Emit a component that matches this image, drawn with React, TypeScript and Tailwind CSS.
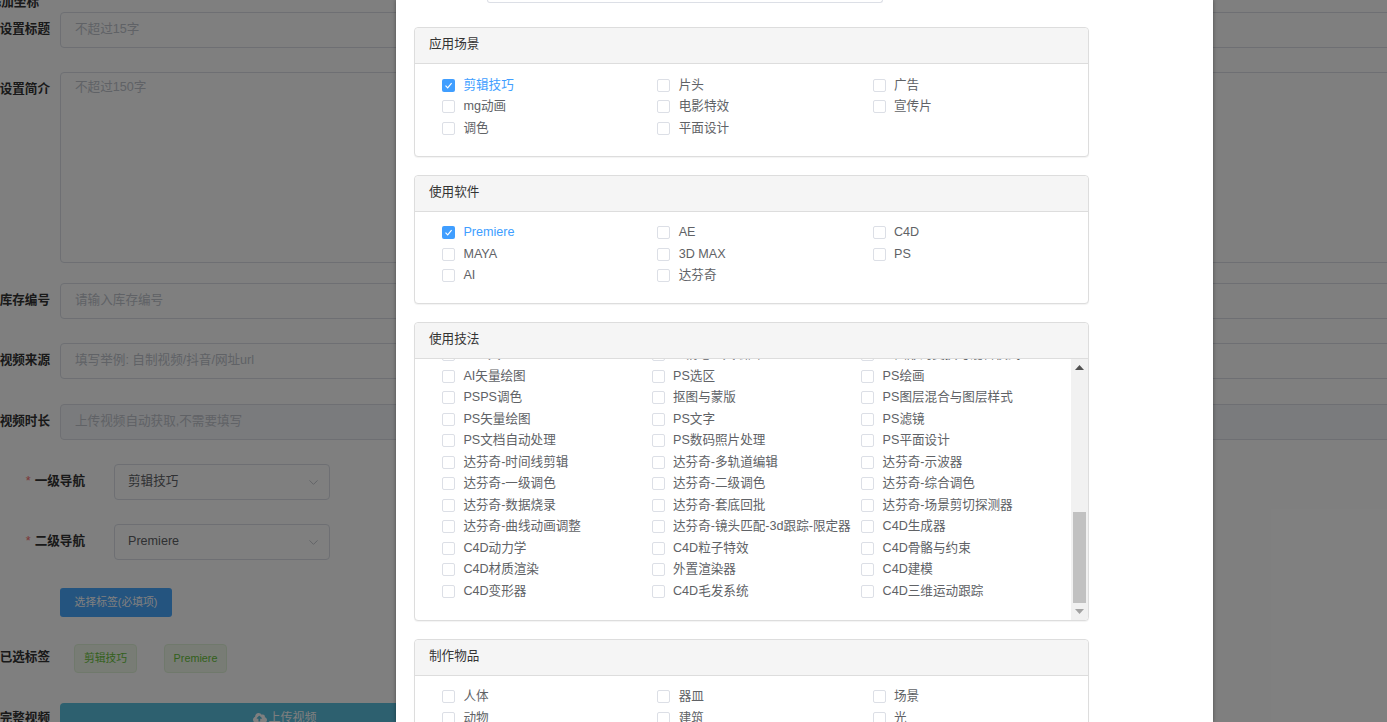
import { ChevronDown } from "lucide-react";
import { FaCloudUploadAlt } from "react-icons/fa";

const scenes = ["剪辑技巧", "片头", "广告", "mg动画", "电影特效", "宣传片", "调色", "平面设计"];
const software = ["Premiere", "AE", "C4D", "MAYA", "3D MAX", "PS", "AI", "达芬奇"];
const skills = [
  "AI工具", "AI钢笔工具绘图", "AI图形的变换与混合模式",
  "AI矢量绘图", "PS选区", "PS绘画",
  "PSPS调色", "抠图与蒙版", "PS图层混合与图层样式",
  "PS矢量绘图", "PS文字", "PS滤镜",
  "PS文档自动处理", "PS数码照片处理", "PS平面设计",
  "达芬奇-时间线剪辑", "达芬奇-多轨道编辑", "达芬奇-示波器",
  "达芬奇-一级调色", "达芬奇-二级调色", "达芬奇-综合调色",
  "达芬奇-数据烧录", "达芬奇-套底回批", "达芬奇-场景剪切探测器",
  "达芬奇-曲线动画调整", "达芬奇-镜头匹配-3d跟踪-限定器", "C4D生成器",
  "C4D动力学", "C4D粒子特效", "C4D骨骼与约束",
  "C4D材质渲染", "外置渲染器", "C4D建模",
  "C4D变形器", "C4D毛发系统", "C4D三维运动跟踪",
];
const objects = ["人体", "器皿", "场景", "动物", "建筑", "光"];

const Check = ({ label, checked }: { label: string; checked?: boolean }) => (
  <div className="flex items-center gap-[8.4px] whitespace-nowrap">
    {checked ? (
      <span className="flex h-[13px] w-[13px] shrink-0 items-center justify-center rounded-[2px] bg-[#409eff]">
        <svg width="9" height="9" viewBox="0 0 9 9" fill="none" stroke="white" strokeWidth="1.2">
          <path d="M1.5 4.6 L3.7 6.8 L7.6 2.2" />
        </svg>
      </span>
    ) : (
      <span className="h-[13px] w-[13px] shrink-0 rounded-[2px] border border-[#dcdfe6] bg-white" />
    )}
    <span className={checked ? "text-[#409eff]" : "text-[#606266]"}>{label}</span>
  </div>
);

const Panel = ({ title, bodyClass, children }: { title: string; bodyClass: string; children: React.ReactNode }) => (
  <div className="mb-[18px] shrink-0 rounded-[4px] border border-[#dddddd] bg-white shadow-[0_1px_1px_rgba(0,0,0,0.05)]">
    <div className="flex h-9 items-center rounded-t-[4px] border-b border-[#dddddd] bg-[#f5f5f5] px-[14px] pb-[2px] text-[12.6px] text-[#333333]">
      {title}
    </div>
    <div className={bodyClass}>{children}</div>
  </div>
);

const Tags = ({ items, checked }: { items: string[]; checked: string }) => (
  <div className="grid grid-cols-[repeat(3,215.3px)] auto-rows-[21.5px] pl-[27px] text-[12.6px]">
    {items.map((t) => (
      <Check key={t} label={t} checked={t === checked} />
    ))}
  </div>
);

const inputCls =
  "h-9 w-full rounded-[4px] border border-[#dcdfe6] bg-white px-[14px] pb-[2px] text-[12.6px] outline-none placeholder:text-[#c0c4cc]";

const Row = ({ label, className, children }: { label: string; className: string; children: React.ReactNode }) => (
  <div className={`flex gap-[10px] ${className}`}>
    <div className="flex h-9 w-[50px] shrink-0 items-center justify-end whitespace-nowrap pb-[2px] text-[12.6px] font-bold text-[#333333]">
      {label}
    </div>
    {children}
  </div>
);

const NavRow = ({ label, value, className }: { label: string; value: string; className: string }) => (
  <div className={`flex items-center gap-[29px] ${className}`}>
    <div className="flex w-[85px] justify-end whitespace-nowrap pb-[2px] text-[12.6px] font-bold text-[#333333]">
      <span className="mr-1 font-normal text-[#f56c6c]">*</span>
      {label}
    </div>
    <div className="flex h-9 w-[216px] items-center justify-between rounded-[4px] border border-[#dcdfe6] bg-white pl-[13px] pr-[8px] text-[12.6px] text-[#606266]">
      <span className="pb-px">{value}</span>
      <ChevronDown size={15} strokeWidth={1.5} className="text-[#c0c4cc]" />
    </div>
  </div>
);

const App = () => {
  return (
    <div className="relative h-[722px] w-[1387px] overflow-hidden bg-white [font-family:'Liberation_Sans','Noto_Sans_CJK_SC',sans-serif]">
      {/* page behind the dialog */}
      <div className="flex w-[1500px] flex-col">
        <div className="flex h-[12px] w-[39px] justify-end whitespace-nowrap text-[12.6px] font-bold leading-[5px] text-[#333333]">
          添加坐标
        </div>
        <Row label="设置标题" className="">
          <input className={inputCls} placeholder="不超过15字" />
        </Row>
        <Row label="设置简介" className="mt-6">
          <textarea className={`${inputCls} !h-[191px] resize-none py-[5px] leading-[18px]`} placeholder="不超过150字" />
        </Row>
        <Row label="库存编号" className="mt-5">
          <input className={inputCls} placeholder="请输入库存编号" />
        </Row>
        <Row label="视频来源" className="mt-6">
          <input className={inputCls} placeholder="填写举例: 自制视频/抖音/网址url" />
        </Row>
        <Row label="视频时长" className="mt-[25px]">
          <input disabled className={`${inputCls} !bg-[#f5f7fa]`} placeholder="上传视频自动获取,不需要填写" />
        </Row>
        <NavRow label="一级导航" value="剪辑技巧" className="mt-6" />
        <NavRow label="二级导航" value="Premiere" className="mt-6" />
        <div className="ml-[60px] mt-7 flex h-[29px] w-[112px] items-center justify-center rounded-[3px] bg-[#48a8ff] text-[10.8px] text-white">
          选择标签(必填项)
        </div>
        <div className="mt-[27px] flex h-[29px] items-center gap-[10px]">
          <div className="flex w-[50px] justify-end whitespace-nowrap pb-[2px] text-[12.6px] font-bold text-[#333333]">已选标签</div>
          <div className="flex gap-[27px] pl-[14px] text-[10.8px] text-[#67c23a]">
            <span className="flex h-[29px] w-[63px] items-center justify-center rounded-[4px] border border-[#e1f3d8] bg-[#f0f9eb]">剪辑技巧</span>
            <span className="flex h-[29px] w-[63px] items-center justify-center rounded-[4px] border border-[#e1f3d8] bg-[#f0f9eb]">Premiere</span>
          </div>
        </div>
        <div className="mt-[30px] flex items-start gap-[10px]">
          <div className="flex h-[30px] w-[50px] items-center justify-end whitespace-nowrap text-[12.6px] font-bold text-[#333333]">完整视频</div>
          <div className="flex h-[30px] w-[450px] items-center justify-center gap-px rounded-[4px] bg-[#5bc0de] text-[12px] text-white">
            <FaCloudUploadAlt size={14} />
            上传视频
          </div>
        </div>
      </div>

      {/* backdrop */}
      <div className="absolute inset-0 bg-black/50" />

      {/* dialog */}
      <div className="absolute bottom-0 left-[396px] top-0 flex w-[817px] flex-col bg-white px-[18px] shadow-[0_0_4px_rgba(0,0,0,0.4)]">
        <div className="ml-[73px] h-[3px] w-[396px] shrink-0 rounded-b-[4px] border border-t-0 border-[#dcdfe6]" />
        <div className="h-6 shrink-0" />
        <div className="w-[675px]">
          <Panel title="应用场景" bodyClass="h-[92px] pt-[10.5px]">
            <Tags items={scenes} checked="剪辑技巧" />
          </Panel>
          <Panel title="使用软件" bodyClass="h-[91px] pt-[10px]">
            <Tags items={software} checked="Premiere" />
          </Panel>
          <Panel title="使用技法" bodyClass="flex h-[261px]">
            <div className="flex-1 overflow-hidden">
              <div className="-mt-[15.25px] grid grid-cols-[repeat(3,209.6px)] auto-rows-[21.5px] pl-[27px] text-[12.6px]">
                {skills.map((t) => (
                  <Check key={t} label={t} />
                ))}
              </div>
            </div>
            <div className="flex w-[17px] shrink-0 flex-col items-center rounded-br-[4px] bg-[#f1f1f1]">
              <div className="flex h-[17px] w-full items-center justify-center">
                <svg width="9" height="5" viewBox="0 0 9 5"><path d="M4.5 0 L9 5 L0 5 Z" fill="#505050" /></svg>
              </div>
              <div className="mt-[136px] h-[91px] w-[13px] bg-[#c1c1c1]" />
              <div className="flex h-[17px] w-full items-center justify-center">
                <svg width="9" height="5" viewBox="0 0 9 5"><path d="M0 0 L9 0 L4.5 5 Z" fill="#a3a3a3" /></svg>
              </div>
            </div>
          </Panel>
          <Panel title="制作物品" bodyClass="h-[130px] pt-[10px]">
            <Tags items={objects} checked="" />
          </Panel>
        </div>
      </div>
    </div>
  );
};

export default App;
